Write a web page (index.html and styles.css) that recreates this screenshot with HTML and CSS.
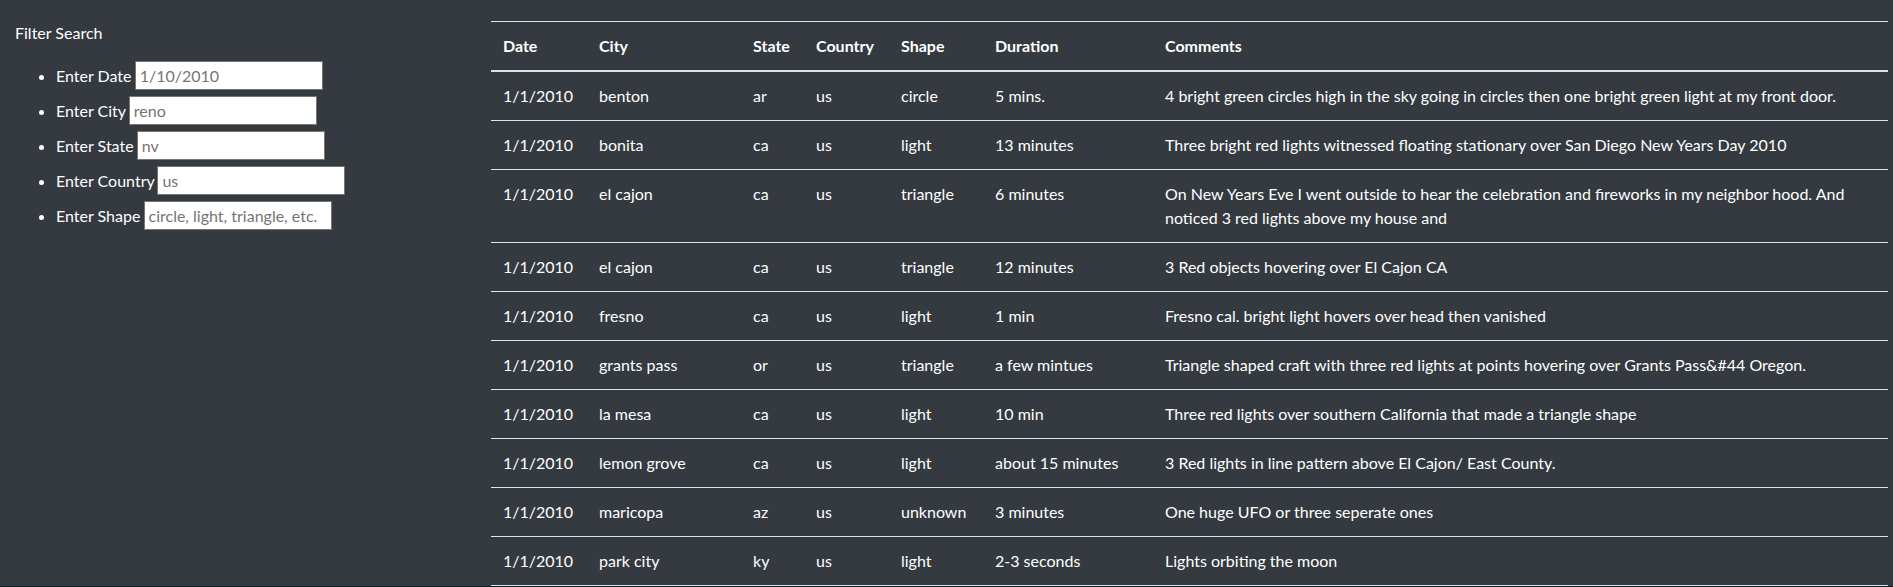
FILE: index.html
```html
<!DOCTYPE html>
<html lang="en">
<head>
<meta charset="utf-8">
<title>UFO Sightings</title>
<link rel="stylesheet" href="styles.css">
</head>
<body>
<div class="page">
  <aside class="filters">
    <div class="filters-title">Filter Search</div>
    <ul class="filter-list">
      <li class="filter-item"><label>Enter Date</label> <input class="filter-input" type="text" placeholder="1/10/2010"></li>
      <li class="filter-item"><label>Enter City</label> <input class="filter-input" type="text" placeholder="reno"></li>
      <li class="filter-item"><label>Enter State</label> <input class="filter-input" type="text" placeholder="nv"></li>
      <li class="filter-item"><label>Enter Country</label> <input class="filter-input" type="text" placeholder="us"></li>
      <li class="filter-item"><label>Enter Shape</label> <input class="filter-input" type="text" placeholder="circle, light, triangle, etc."></li>
    </ul>
  </aside>
  <main class="results">
    <table class="ufo-table">
      <thead>
        <tr>
          <th class="c-date">Date</th>
          <th class="c-city">City</th>
          <th class="c-state">State</th>
          <th class="c-country">Country</th>
          <th class="c-shape">Shape</th>
          <th class="c-duration">Duration</th>
          <th class="c-comments">Comments</th>
        </tr>
      </thead>
      <tbody>
        <tr><td>1/1/2010</td><td>benton</td><td>ar</td><td>us</td><td>circle</td><td>5 mins.</td><td>4 bright green circles high in the sky going in circles then one bright green light at my front door.</td></tr>
        <tr><td>1/1/2010</td><td>bonita</td><td>ca</td><td>us</td><td>light</td><td>13 minutes</td><td>Three bright red lights witnessed floating stationary over San Diego New Years Day 2010</td></tr>
        <tr><td>1/1/2010</td><td>el cajon</td><td>ca</td><td>us</td><td>triangle</td><td>6 minutes</td><td>On New Years Eve I went outside to hear the celebration and fireworks in my neighbor hood. And noticed 3 red lights above my house and</td></tr>
        <tr><td>1/1/2010</td><td>el cajon</td><td>ca</td><td>us</td><td>triangle</td><td>12 minutes</td><td>3 Red objects hovering over El Cajon CA</td></tr>
        <tr><td>1/1/2010</td><td>fresno</td><td>ca</td><td>us</td><td>light</td><td>1 min</td><td>Fresno cal. bright light hovers over head then vanished</td></tr>
        <tr><td>1/1/2010</td><td>grants pass</td><td>or</td><td>us</td><td>triangle</td><td>a few mintues</td><td>Triangle shaped craft with three red lights at points hovering over Grants Pass&amp;#44 Oregon.</td></tr>
        <tr><td>1/1/2010</td><td>la mesa</td><td>ca</td><td>us</td><td>light</td><td>10 min</td><td>Three red lights over southern California that made a triangle shape</td></tr>
        <tr><td>1/1/2010</td><td>lemon grove</td><td>ca</td><td>us</td><td>light</td><td>about 15 minutes</td><td>3 Red lights in line pattern above El Cajon/ East County.</td></tr>
        <tr><td>1/1/2010</td><td>maricopa</td><td>az</td><td>us</td><td>unknown</td><td>3 minutes</td><td>One huge UFO or three seperate ones</td></tr>
        <tr><td>1/1/2010</td><td>park city</td><td>ky</td><td>us</td><td>light</td><td>2-3 seconds</td><td>Lights orbiting the moon</td></tr>
      </tbody>
    </table>
  </main>
</div>
</body>
</html>
```
FILE: styles.css
```css
* { box-sizing: border-box; }

html, body {
  margin: 0;
  padding: 0;
}

body {
  background: #0f1c2b;
  color: #fff;
  font-family: "Lato", "Liberation Sans", sans-serif;
  font-size: 16px;
  line-height: 1.5;
}

.page {
  display: flex;
  align-items: flex-start;
  background: #343a40;
  padding-top: 21px;
}

.filters {
  width: 491px;
  flex: 0 0 491px;
  padding: 0 15px;
}

.filters-title {
  line-height: 24px;
}

.filter-list {
  margin: 13px 0 0 1px;
  padding-left: 40px;
}

.filter-item {
  padding: 3px 0;
  line-height: 29px;
  height: 35px;
}

.filter-input {
  width: 188px;
  height: 29px;
  padding: 2px 4px;
  border: 1px solid #767676;
  background: #fff;
  font-family: inherit;
  font-size: 16px;
  color: #333;
  vertical-align: top;
  margin: 0 0 0 -1px;
}

.filter-input::placeholder {
  color: #757575;
}

.results {
  width: 1397px;
  flex: 0 0 1397px;
}

.ufo-table {
  width: 100%;
  table-layout: fixed;
  border-collapse: collapse;
  color: #fff;
}

.ufo-table th,
.ufo-table td {
  padding: 12px;
  text-align: left;
  vertical-align: top;
  border-top: 1px solid #dee2e6;
}

.ufo-table th {
  font-weight: 700;
  border-bottom: 2px solid #dee2e6;
}

.ufo-table tbody tr:last-child td {
  border-bottom: 1px solid #dee2e6;
}

.c-date { width: 96px; }
.c-city { width: 154px; }
.c-state { width: 63px; }
.c-country { width: 85px; }
.c-shape { width: 94px; }
.c-duration { width: 170px; }
.c-comments { width: 735px; }
```
